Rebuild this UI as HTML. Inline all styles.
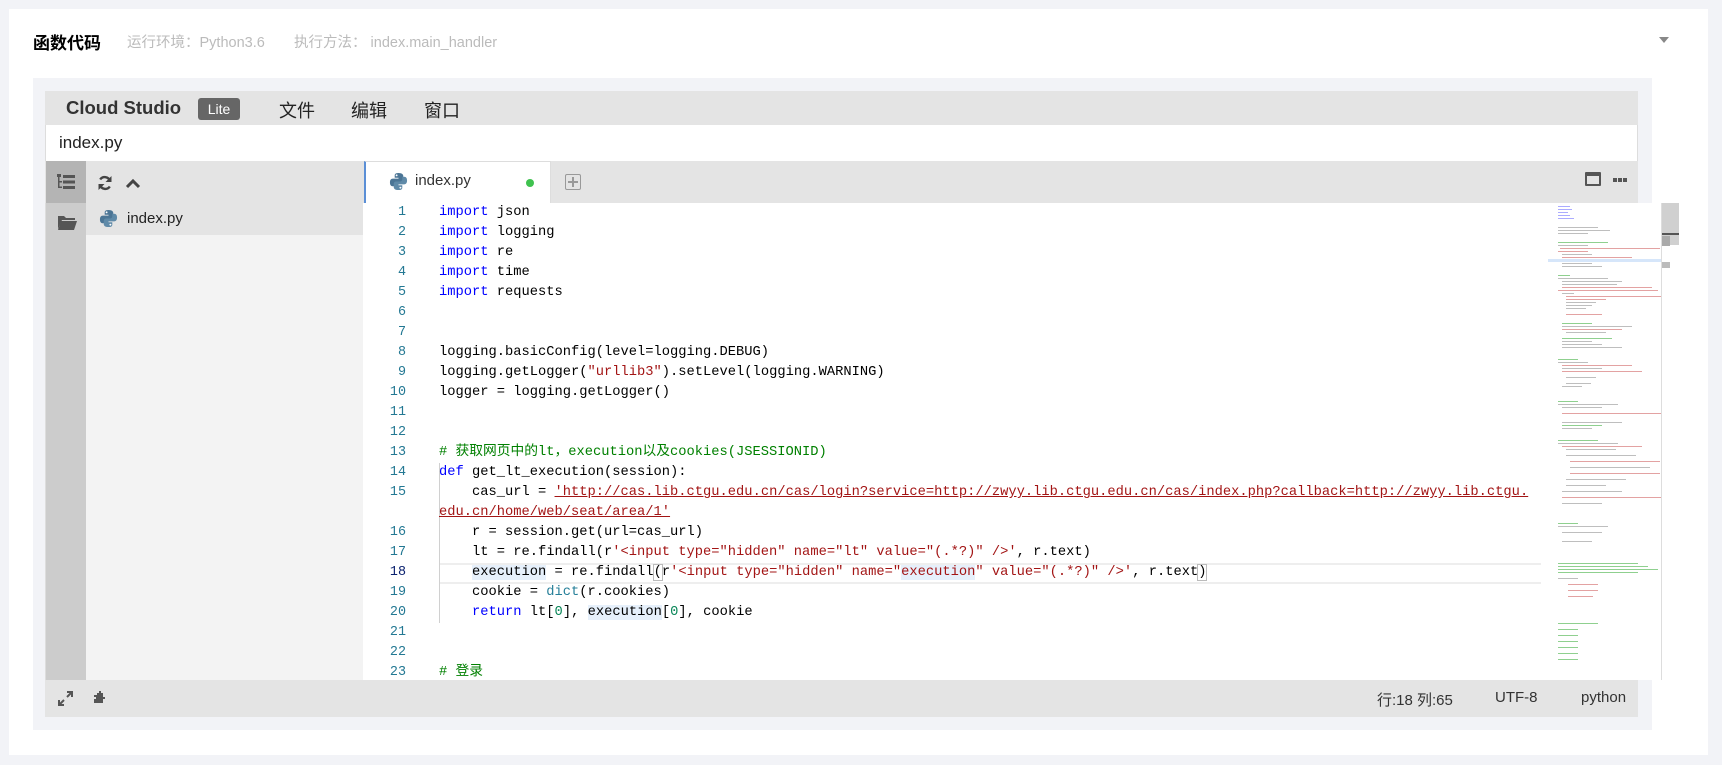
<!DOCTYPE html>
<html><head><meta charset="utf-8"><style>
*{margin:0;padding:0;box-sizing:border-box}
body{width:1722px;height:765px;background:#f2f3f7;position:relative;overflow:hidden;font-family:"Liberation Sans","Noto Sans CJK SC",sans-serif}
.a{position:absolute}
.code{font-family:"Liberation Mono","Noto Sans CJK SC",monospace;font-size:13.75px;line-height:20px;white-space:pre;color:#000}
.ln{position:absolute;left:363px;width:43px;text-align:right;color:#237893;font-family:"Liberation Mono",monospace;font-size:13.4px;line-height:20px}
.cl{position:absolute;left:439px}
.k{color:#0000ff}.s{color:#a31515}.c{color:#008000}.b{color:#267f99}
.mm{position:absolute;height:1px;background:#888;opacity:.55}
</style></head><body>
<div class="a" style="left:9px;top:9px;width:1699px;height:746px;background:#fff"></div>
<div class="a" style="left:33px;top:29px;font-size:17px;font-weight:bold;color:#000">函数代码</div>
<div class="a" style="left:127px;top:31px;font-size:14.5px;color:#bbb">运行环境：Python3.6</div>
<div class="a" style="left:294px;top:31px;font-size:14.5px;color:#bbb">执行方法： index.main_handler</div>
<div class="a" style="left:1659px;top:37px;width:0;height:0;border-left:5px solid transparent;border-right:5px solid transparent;border-top:6px solid #888"></div>
<div class="a" style="left:33px;top:78px;width:1619px;height:652px;background:#f2f3f7"></div>
<!-- IDE -->
<div class="a" style="left:45px;top:91px;width:1593px;height:626px;background:#fff;border:1px solid #ddd"></div>
<div class="a" style="left:45px;top:91px;width:1593px;height:34px;background:#e4e4e4"></div>
<div class="a" style="left:66px;top:97px;font-size:18.5px;font-weight:bold;color:#333">Cloud Studio</div>
<div class="a" style="left:198px;top:98px;width:42px;height:22px;background:#666;border-radius:3px;color:#fff;font-size:14px;text-align:center;line-height:22px">Lite</div>
<div class="a" style="left:279px;top:97px;font-size:18px;color:#222">文件</div>
<div class="a" style="left:351px;top:97px;font-size:18px;color:#222">编辑</div>
<div class="a" style="left:424px;top:97px;font-size:18px;color:#222">窗口</div>
<div class="a" style="left:59px;top:133px;font-size:17px;color:#222">index.py</div>
<!-- tab row -->
<div class="a" style="left:45px;top:161px;width:1593px;height:42px;background:#e4e4e4"></div>
<div class="a" style="left:46px;top:161px;width:40px;height:519px;background:#ccc"></div>
<div class="a" style="left:46px;top:161px;width:40px;height:42px;background:#b4b4b4"></div>
<svg class="a" style="left:56px;top:172px" width="20" height="20" viewBox="0 0 20 20"><g fill="#555"><rect x="1" y="2" width="4" height="3"/><rect x="2" y="5" width="1.5" height="11"/><rect x="2" y="9" width="4" height="1.5"/><rect x="2" y="14.5" width="4" height="1.5"/><rect x="7" y="3" width="12" height="3"/><rect x="7" y="8.5" width="12" height="3"/><rect x="7" y="14" width="12" height="3"/></g></svg>
<svg class="a" style="left:57px;top:213px" width="20" height="18" viewBox="0 0 20 18"><path d="M1 3h6l2 2h9v2H5L1 16z" fill="#555"/><path d="M4 8h16l-3 9H1z" fill="#555"/></svg>
<div class="a" style="left:86px;top:203px;width:277px;height:477px;background:#f3f3f3"></div>
<div class="a" style="left:86px;top:203px;width:277px;height:32px;background:#e4e4e4"></div>
<svg class="a" style="left:97px;top:175px" width="16" height="16" viewBox="0 0 16 16"><path d="M13 6A5.5 5.5 0 0 0 3.2 4.5M3 10a5.5 5.5 0 0 0 9.8 1.5" stroke="#444" stroke-width="2.4" fill="none"/><path d="M14.5 1v6h-6z M1.5 15V9h6z" fill="#444"/></svg>
<svg class="a" style="left:125px;top:176px" width="16" height="14" viewBox="0 0 16 14"><path d="M2 11l6-6 6 6" stroke="#444" stroke-width="3" fill="none"/></svg>
<svg class="a" style="left:99px;top:209px" width="19" height="19" viewBox="0 0 20 20"><path d="M10 1c-4 0-4 1.8-4 3v2h4v1H4C2 7 1 8.5 1 11s1 4 3 4h2v-2.5C6 11 7 10 8.5 10h4C14 10 15 9 15 7.5V4c0-1.5-1.5-3-5-3z" fill="#4b7595"/><path d="M10 19c4 0 4-1.8 4-3v-2h-4v-1h6c2 0 3-1.5 3-4s-1-4-3-4h-2v2.5C14 9 13 10 11.5 10h-4C6 10 5 11 5 12.5V16c0 1.5 1.5 3 5 3z" fill="#5f8aa8"/><circle cx="8" cy="3.5" r="1" fill="#fff"/><circle cx="12" cy="16.5" r="1" fill="#fff"/></svg>
<div class="a" style="left:127px;top:210px;font-size:15px;color:#222">index.py</div>
<!-- editor tab -->
<div class="a" style="left:364px;top:161px;width:187px;height:42px;background:#fff;border-left:2px solid #5b8fd6;border-right:1px solid #ddd;border-top:1px solid #ddd"></div>
<svg class="a" style="left:389px;top:172px" width="19" height="19" viewBox="0 0 20 20"><path d="M10 1c-4 0-4 1.8-4 3v2h4v1H4C2 7 1 8.5 1 11s1 4 3 4h2v-2.5C6 11 7 10 8.5 10h4C14 10 15 9 15 7.5V4c0-1.5-1.5-3-5-3z" fill="#4b7595"/><path d="M10 19c4 0 4-1.8 4-3v-2h-4v-1h6c2 0 3-1.5 3-4s-1-4-3-4h-2v2.5C14 9 13 10 11.5 10h-4C6 10 5 11 5 12.5V16c0 1.5 1.5 3 5 3z" fill="#5f8aa8"/><circle cx="8" cy="3.5" r="1" fill="#fff"/><circle cx="12" cy="16.5" r="1" fill="#fff"/></svg>
<div class="a" style="left:415px;top:172px;font-size:15px;color:#333">index.py</div>
<div class="a" style="left:526px;top:179px;width:8px;height:8px;border-radius:50%;background:#3fc24f"></div>
<div class="a" style="left:565px;top:174px;width:16px;height:16px;border:1.5px solid #999;border-radius:2px"></div>
<div class="a" style="left:568px;top:181.3px;width:10px;height:1.5px;background:#999"></div>
<div class="a" style="left:572.3px;top:177px;width:1.5px;height:10px;background:#999"></div>
<div class="a" style="left:1585px;top:172px;width:16px;height:14px;border:2px solid #555;border-top-width:4px;border-radius:1px"></div>
<div class="a" style="left:1613px;top:178px;width:4px;height:4px;background:#555;box-shadow:5px 0 #555,10px 0 #555"></div>
<!-- code area -->
<div class="a" style="left:363px;top:203px;width:1316px;height:477px;background:#fff"></div>
<div class="a" style="left:439px;top:563px;width:1102px;height:21px;border-top:2px solid #eee;border-bottom:2px solid #eee"></div>
<div class="a" style="left:439px;top:463px;width:1px;height:160px;background:#d0d0d0"></div>
<div class="a code" style="left:0;top:203px;width:1548px;height:477px">
<div class="ln" style="top:0">1</div><div class="cl" style="top:0"><span class="k">import</span> json</div>
<div class="ln" style="top:20px">2</div><div class="cl" style="top:20px"><span class="k">import</span> logging</div>
<div class="ln" style="top:40px">3</div><div class="cl" style="top:40px"><span class="k">import</span> re</div>
<div class="ln" style="top:60px">4</div><div class="cl" style="top:60px"><span class="k">import</span> time</div>
<div class="ln" style="top:80px">5</div><div class="cl" style="top:80px"><span class="k">import</span> requests</div>
<div class="ln" style="top:100px">6</div>
<div class="ln" style="top:120px">7</div>
<div class="ln" style="top:140px">8</div><div class="cl" style="top:140px">logging.basicConfig(level=logging.DEBUG)</div>
<div class="ln" style="top:160px">9</div><div class="cl" style="top:160px">logging.getLogger(<span class="s">"urllib3"</span>).setLevel(logging.WARNING)</div>
<div class="ln" style="top:180px">10</div><div class="cl" style="top:180px">logger = logging.getLogger()</div>
<div class="ln" style="top:200px">11</div>
<div class="ln" style="top:220px">12</div>
<div class="ln" style="top:240px">13</div><div class="cl c" style="top:240px"># 获取网页中的lt，execution以及cookies(JSESSIONID)</div>
<div class="ln" style="top:260px">14</div><div class="cl" style="top:260px"><span class="k">def</span> get_lt_execution(session):</div>
<div class="ln" style="top:280px">15</div><div class="cl" style="top:280px">    cas_url = <span class="s" style="text-decoration:underline #a31515">'http://cas.lib.ctgu.edu.cn/cas/login?service=http://zwyy.lib.ctgu.edu.cn/cas/index.php?callback=http://zwyy.lib.ctgu.</span></div>
<div class="cl" style="top:300px"><span class="s" style="text-decoration:underline #a31515">edu.cn/home/web/seat/area/1'</span></div>
<div class="ln" style="top:320px">16</div><div class="cl" style="top:320px">    r = session.get(url=cas_url)</div>
<div class="ln" style="top:340px">17</div><div class="cl" style="top:340px">    lt = re.findall(r<span class="s">'&lt;input type="hidden" name="lt" value="(.*?)" /&gt;'</span>, r.text)</div>
<div class="ln" style="top:360px;color:#0b216f">18</div><div class="cl" style="top:360px">    <span style="background:#e6f0fb">execution</span> = re.findall<span style="outline:1px solid #bbb">(</span>r<span class="s">'&lt;input type="hidden" name="<span style="background:#e6f0fb">execution</span>" value="(.*?)" /&gt;'</span>, r.text<span style="outline:1px solid #bbb">)</span></div>
<div class="ln" style="top:380px">19</div><div class="cl" style="top:380px">    cookie = <span class="b">dict</span>(r.cookies)</div>
<div class="ln" style="top:400px">20</div><div class="cl" style="top:400px">    <span class="k">return</span> lt[<span style="color:#098658">0</span>], <span style="background:#e6f0fb">execution</span>[<span style="color:#098658">0</span>], cookie</div>
<div class="ln" style="top:420px">21</div>
<div class="ln" style="top:440px">22</div>
<div class="ln" style="top:460px">23</div><div class="cl c" style="top:460px"># 登录</div>
</div>
<!-- minimap -->
<div class="a" style="left:1548px;top:203px;width:113px;height:477px;overflow:hidden">
<div class="mm" style="left:10px;top:3px;width:12px;background:#66f"></div><div class="mm" style="left:10px;top:6px;width:14px;background:#66f"></div><div class="mm" style="left:10px;top:9px;width:10px;background:#66f"></div><div class="mm" style="left:10px;top:12px;width:12px;background:#66f"></div><div class="mm" style="left:10px;top:15px;width:16px;background:#66f"></div>
<div class="mm" style="left:10px;top:24px;width:40px"></div><div class="mm" style="left:10px;top:27px;width:52px"></div><div class="mm" style="left:10px;top:30px;width:30px"></div>
<div class="mm" style="left:10px;top:39px;width:50px;background:#3a3"></div><div class="mm" style="left:10px;top:42px;width:30px"></div><div class="mm" style="left:12px;top:45px;width:100px;background:#c55"></div><div class="mm" style="left:10px;top:48px;width:30px;background:#c55"></div><div class="mm" style="left:14px;top:51px;width:30px"></div><div class="mm" style="left:14px;top:54px;width:70px;background:#c55"></div><div class="a" style="left:0;top:56px;width:113px;height:3px;background:#d6e6fa"></div><div class="mm" style="left:14px;top:60px;width:30px"></div><div class="mm" style="left:14px;top:63px;width:40px"></div>
<div class="mm" style="left:10px;top:72px;width:12px;background:#3a3"></div>
<div class="mm" style="left:10px;top:75px;width:50px"></div><div class="mm" style="left:14px;top:78px;width:60px"></div><div class="mm" style="left:14px;top:81px;width:55px"></div><div class="mm" style="left:14px;top:84px;width:90px;background:#c55"></div><div class="mm" style="left:10px;top:87px;width:100px;background:#c55"></div><div class="mm" style="left:14px;top:90px;width:12px"></div>
<div class="mm" style="left:18px;top:93px;width:95px;background:#c55"></div><div class="mm" style="left:18px;top:96px;width:40px;background:#c55"></div><div class="mm" style="left:18px;top:99px;width:30px"></div><div class="mm" style="left:18px;top:102px;width:26px"></div><div class="mm" style="left:18px;top:105px;width:20px"></div><div class="mm" style="left:18px;top:111px;width:36px;background:#c55"></div>
<div class="mm" style="left:14px;top:120px;width:30px;background:#3a3"></div><div class="mm" style="left:14px;top:123px;width:70px"></div><div class="mm" style="left:14px;top:126px;width:60px;background:#c55"></div><div class="mm" style="left:18px;top:129px;width:40px"></div><div class="mm" style="left:14px;top:135px;width:50px;background:#3a3"></div><div class="mm" style="left:14px;top:138px;width:30px"></div><div class="mm" style="left:14px;top:141px;width:40px"></div><div class="mm" style="left:14px;top:144px;width:60px"></div>
<div class="mm" style="left:10px;top:156px;width:20px;background:#3a3"></div><div class="mm" style="left:10px;top:159px;width:30px"></div><div class="mm" style="left:14px;top:162px;width:70px;background:#c55"></div><div class="mm" style="left:14px;top:165px;width:40px"></div><div class="mm" style="left:14px;top:168px;width:80px;background:#c55"></div><div class="mm" style="left:18px;top:174px;width:30px"></div><div class="mm" style="left:18px;top:180px;width:25px"></div><div class="mm" style="left:14px;top:183px;width:20px"></div>
<div class="mm" style="left:10px;top:198px;width:20px;background:#3a3"></div><div class="mm" style="left:10px;top:201px;width:60px"></div><div class="mm" style="left:14px;top:204px;width:40px"></div><div class="mm" style="left:14px;top:210px;width:110px;background:#c55"></div><div class="mm" style="left:14px;top:219px;width:60px"></div><div class="mm" style="left:14px;top:222px;width:40px;background:#3a3"></div><div class="mm" style="left:14px;top:225px;width:30px"></div>
<div class="mm" style="left:10px;top:237px;width:40px;background:#3a3"></div><div class="mm" style="left:10px;top:240px;width:60px"></div><div class="mm" style="left:14px;top:243px;width:80px;background:#c55"></div><div class="mm" style="left:18px;top:246px;width:50px"></div><div class="mm" style="left:18px;top:252px;width:70px"></div><div class="mm" style="left:22px;top:258px;width:90px;background:#c55"></div><div class="mm" style="left:22px;top:264px;width:80px"></div><div class="mm" style="left:22px;top:270px;width:90px;background:#c55"></div><div class="mm" style="left:18px;top:276px;width:60px"></div><div class="mm" style="left:18px;top:282px;width:40px"></div><div class="mm" style="left:14px;top:288px;width:60px"></div><div class="mm" style="left:14px;top:294px;width:100px;background:#c55"></div><div class="mm" style="left:14px;top:300px;width:40px"></div>
<div class="mm" style="left:10px;top:320px;width:20px;background:#3a3"></div><div class="mm" style="left:10px;top:323px;width:50px"></div><div class="mm" style="left:14px;top:329px;width:40px"></div><div class="mm" style="left:14px;top:338px;width:30px"></div>
<div class="mm" style="left:10px;top:360px;width:80px;background:#3a3"></div><div class="mm" style="left:10px;top:363px;width:90px;background:#3a3"></div><div class="mm" style="left:10px;top:366px;width:100px;background:#3a3"></div><div class="mm" style="left:10px;top:369px;width:80px;background:#3a3"></div><div class="mm" style="left:10px;top:375px;width:20px"></div><div class="mm" style="left:20px;top:381px;width:30px;background:#c55"></div><div class="mm" style="left:20px;top:387px;width:30px;background:#c55"></div><div class="mm" style="left:20px;top:393px;width:25px;background:#c55"></div>
<div class="mm" style="left:10px;top:420px;width:40px;background:#3a3"></div><div class="mm" style="left:10px;top:426px;width:20px;background:#3a3"></div><div class="mm" style="left:10px;top:432px;width:20px;background:#3a3"></div><div class="mm" style="left:10px;top:438px;width:20px;background:#3a3"></div><div class="mm" style="left:10px;top:444px;width:20px;background:#3a3"></div><div class="mm" style="left:10px;top:450px;width:20px;background:#3a3"></div><div class="mm" style="left:10px;top:456px;width:20px;background:#3a3"></div>
</div>
<div class="a" style="left:1661px;top:203px;width:1px;height:477px;background:#ddd"></div>
<div class="a" style="left:1662px;top:203px;width:17px;height:42px;background:#d0d0d0"></div>
<div class="a" style="left:1662px;top:233px;width:17px;height:2px;background:#555"></div>
<div class="a" style="left:1662px;top:236px;width:8px;height:10px;background:#aaa"></div>
<div class="a" style="left:1662px;top:262px;width:8px;height:6px;background:#bbb"></div>
<!-- status bar -->
<div class="a" style="left:45px;top:680px;width:1593px;height:37px;background:#e4e4e4"></div>
<svg class="a" style="left:58px;top:691px" width="15" height="15" viewBox="0 0 15 15"><path d="M9 1h5v5M14 1L9 6M6 14H1V9M1 14l5-5" stroke="#555" stroke-width="2" fill="none"/></svg>
<svg class="a" style="left:92px;top:690px" width="16" height="16" viewBox="0 0 16 16"><path d="M5 3h2V1h2v2h2v4h2v2h-2v4H2V9h2V7H2V5h3z" fill="#555"/></svg>
<div class="a" style="left:1377px;top:689px;font-size:15px;color:#333">行:18 列:65</div>
<div class="a" style="left:1495px;top:689px;font-size:15px;color:#333">UTF-8</div>
<div class="a" style="left:1581px;top:689px;font-size:15px;color:#333">python</div>
</body></html>
